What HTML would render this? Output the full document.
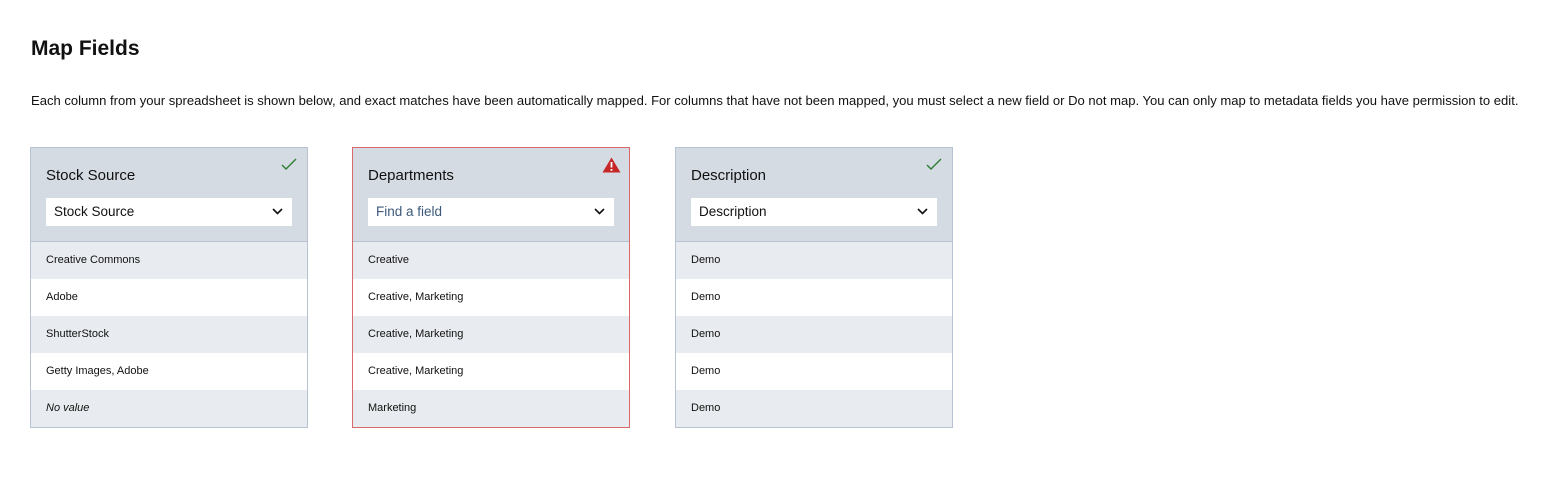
<!DOCTYPE html>
<html><head><style>
body{margin:0;background:#fff;font-family:"Liberation Sans",Arial,sans-serif;color:#111;width:1550px;height:495px;overflow:hidden;position:relative}
h1{position:absolute;left:31px;top:37px;margin:0;font-size:21px;font-weight:600}
p{position:absolute;left:31px;top:93px;margin:0;font-size:13.05px;white-space:nowrap}
.card{position:absolute;top:147px;width:276px;border:1px solid #b7c3d3;background:#fff}
.card.err{border-color:#d9686b}
.hd{height:93px;background:#d4dbe3;border-bottom:1px solid #b7c3d3;position:relative}
.t{position:absolute;left:15px;top:19px;font-size:15px}
.sel{position:absolute;left:15px;top:50px;width:246px;height:28px;background:#fff;font-size:13.5px;line-height:28px;box-sizing:border-box;padding-left:8px}
.sel svg{position:absolute;right:9px;top:10px}
.ic{position:absolute;right:10px;top:10px}
.r{height:37px;line-height:37px;font-size:11px;padding-left:15px}
.r:nth-child(even){background:#e8ebef}
</style></head><body>
<h1>Map Fields</h1>
<p>Each column from your spreadsheet is shown below, and exact matches have been automatically mapped. For columns that have not been mapped, you must select a new field or Do not map. You can only map to metadata fields you have permission to edit.</p>

<div class="card" style="left:30px">
<div class="hd"><div class="t">Stock Source</div>
<svg class="ic" width="16" height="13" viewBox="0 0 16 13"><path d="M1 7l4 4 10-10" fill="none" stroke="#2e7d32" stroke-width="1.4"/></svg>
<div class="sel">Stock Source<svg width="11" height="7" viewBox="0 0 11 7"><path d="M1 1l4.5 4.5L10 1" fill="none" stroke="#111" stroke-width="1.6"/></svg></div></div>
<div><div class="r" style="display:none"></div><div class="r">Creative Commons</div><div class="r">Adobe</div><div class="r">ShutterStock</div><div class="r">Getty Images, Adobe</div><div class="r"><i>No value</i></div></div>
</div>

<div class="card err" style="left:352px">
<div class="hd"><div class="t">Departments</div>
<svg class="ic" width="19" height="16" viewBox="0 0 19 16" style="right:8px;top:9px"><path d="M9.5 0.5L18.5 15.5H0.5Z" fill="#c62828"/><rect x="8.6" y="5" width="1.8" height="5.5" fill="#fff"/><rect x="8.6" y="12" width="1.8" height="1.8" fill="#fff"/></svg>
<div class="sel" style="color:#3d5a7a">Find a field<svg width="11" height="7" viewBox="0 0 11 7"><path d="M1 1l4.5 4.5L10 1" fill="none" stroke="#111" stroke-width="1.6"/></svg></div></div>
<div><div class="r" style="display:none"></div><div class="r">Creative</div><div class="r">Creative, Marketing</div><div class="r">Creative, Marketing</div><div class="r">Creative, Marketing</div><div class="r">Marketing</div></div>
</div>

<div class="card" style="left:675px">
<div class="hd"><div class="t">Description</div>
<svg class="ic" width="16" height="13" viewBox="0 0 16 13"><path d="M1 7l4 4 10-10" fill="none" stroke="#2e7d32" stroke-width="1.4"/></svg>
<div class="sel">Description<svg width="11" height="7" viewBox="0 0 11 7"><path d="M1 1l4.5 4.5L10 1" fill="none" stroke="#111" stroke-width="1.6"/></svg></div></div>
<div><div class="r" style="display:none"></div><div class="r">Demo</div><div class="r">Demo</div><div class="r">Demo</div><div class="r">Demo</div><div class="r">Demo</div></div>
</div>
</body></html>
